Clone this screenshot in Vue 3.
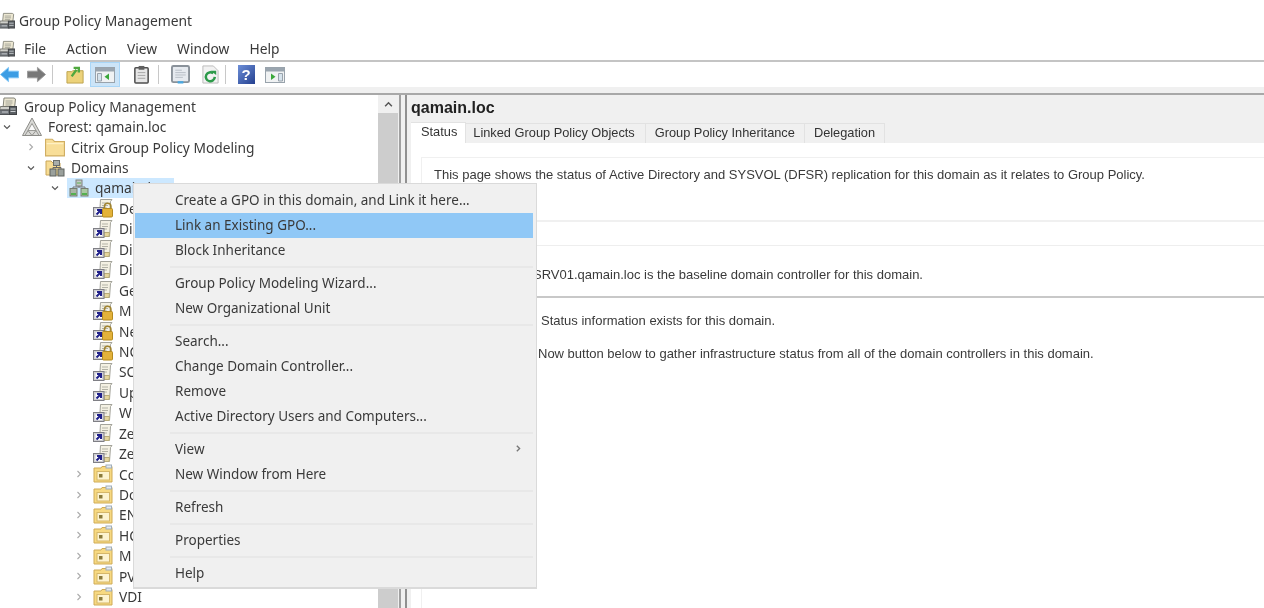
<script setup>
const menuBar = ['File', 'Action', 'View', 'Window', 'Help']
const tools = [
  ['back'], ['forward'], 'sep', ['up'], ['tree', true], ['clip'], 'sep', ['props'], ['refresh'], 'sep', ['help'], ['pane'],
]
const rows = [
  { level: 0, icon: 'gpm', text: 'Group Policy Management' },
  { level: 1, icon: 'forest', text: 'Forest: qamain.loc', chev: 'open' },
  { level: 2, icon: 'folder', text: 'Citrix Group Policy Modeling', chev: 'closed' },
  { level: 2, icon: 'domains', text: 'Domains', chev: 'open' },
  { level: 3, icon: 'domain', text: 'qamain.loc', chev: 'open', selected: true },
  ...[['De', 1], ['Di'], ['Di'], ['Di'], ['Ge'], ['M', 1], ['Ne', 1], ['NC', 1], ['SC'], ['Up'], ['W'], ['Ze'], ['Ze']].map(([text, lock]) => ({
    level: 4, icon: lock ? 'gpolock' : 'gpo', text,
  })),
  ...['Co', 'Do', 'EN', 'HC', 'M', 'PV', 'VDI'].map((text) => ({ level: 4, icon: 'ou', text, chev: 'closed' })),
]
const tabs = ['Status', 'Linked Group Policy Objects', 'Group Policy Inheritance', 'Delegation']
const menu = [
  ['Create a GPO in this domain, and Link it here...', 'Link an Existing GPO...', 'Block Inheritance'],
  ['Group Policy Modeling Wizard...', 'New Organizational Unit'],
  ['Search...', 'Change Domain Controller...', 'Remove', 'Active Directory Users and Computers...'],
  ['View', 'New Window from Here'],
  ['Refresh'],
  ['Properties'],
  ['Help'],
]
</script>

<template>
  <div class="app">
    <svg class="sprite" width="0" height="0">
      <defs>
        <symbol id="gpm" viewBox="0 0 18 18">
          <path d="M5 1h10l1.500 1-1 9H4z" fill="#ece7d2" stroke="#85857a" />
          <path d="M6.500 4h7M6.500 6h7M6.500 8h6" stroke="#a3a396" />
          <path d="M1.500 9.500h9l1 3.500H.5z" fill="#cfcfca" stroke="#77776f" />
          <rect x="0.500" y="13" width="11" height="4.500" fill="#74797e" stroke="#505357" />
          <rect x="10.500" y="9.500" width="7" height="8" fill="#5a5f63" stroke="#404346" />
          <path d="M11.500 12h5M11.500 14.500h5" stroke="#c8ccd0" />
          <path d="M3 15h6" stroke="#c9ccd0" />
        </symbol>
        <symbol id="forest" viewBox="0 0 20 20">
          <path d="M10 1 19.500 18.500H.5z" fill="#d9d9d6" stroke="#8b8b87" />
          <path d="M10 6.500 6 13.500h8z" fill="#fafafa" stroke="#9a9a96" />
          <path d="M6 13.500 3 18.500M14 13.500l3 5M6 13.500l4 5 4-5" stroke="#959591" fill="none" />
        </symbol>
        <symbol id="folder" viewBox="0 0 18 18">
          <path d="M.5 2h6l2 2h9v13H.5z" fill="#f8de98" stroke="#d0ae62" />
          <path d="M1.500 6h15" stroke="#fff2c8" />
        </symbol>
        <symbol id="domains" viewBox="0 0 20 18">
          <path d="M1 2h5l2 2h7v12H1z" fill="#f7dc93" stroke="#c9a658" />
          <rect x="8.500" y="1.500" width="6" height="5" fill="#a9aeaa" stroke="#6b6f6c" />
          <rect x="5" y="10" width="6" height="7" fill="#9aa09c" stroke="#5e625f" />
          <rect x="13" y="10" width="6" height="7" fill="#9aa09c" stroke="#5e625f" />
          <path d="M11.500 6.500V9M8 10V8.500h8V10" stroke="#666" fill="none" />
        </symbol>
        <symbol id="domain" viewBox="0 0 20 18">
          <rect x="7" y="1" width="6" height="6" fill="#c5c9c6" stroke="#7d817c" />
          <rect x="1" y="9.500" width="7" height="7.500" fill="#a9b5a6" stroke="#757d70" />
          <rect x="12" y="9.500" width="7" height="7.500" fill="#a9c8a2" stroke="#757d70" />
          <path d="M10 7v1.500M4 9.500V8h12v1.500" stroke="#777" fill="none" />
          <path d="M2 15h5M13 15h5" stroke="#55b04e" stroke-width="2" />
          <path d="M8 4h4" stroke="#55b04e" />
        </symbol>
        <g id="scroll">
          <path d="M7.500 1.500h11.500l-1.500 2-1 14H6.500z" fill="#f4f1e3" stroke="#a3a39a" />
          <path d="M9 5h6M9 7.500h6M9 10h5" stroke="#b3b3a6" />
          <path d="M11 13.500h5.500l-.5 4h-5z" fill="#e4d59c" stroke="#b8ab78" />
          <rect x="0.500" y="9.500" width="10.500" height="9" fill="#cfcfd3" stroke="#7f7f85" />
          <rect x="2.500" y="11.500" width="6.500" height="5.500" fill="#fff" />
          <path d="M3.500 16.500 7.500 12.500M4 12h4v4" stroke="#20208a" stroke-width="2" fill="none" />
        </g>
        <symbol id="gpo" viewBox="0 0 20 20"><use href="#scroll" /></symbol>
        <symbol id="gpolock" viewBox="0 0 20 20">
          <use href="#scroll" />
          <path d="M11.500 11V8.500a3.200 3.200 0 0 1 6.400 0V11" fill="none" stroke="#9f8330" stroke-width="1.600" />
          <rect x="9.500" y="10.500" width="10" height="8.500" rx="1" fill="#e3b23a" stroke="#b58b20" />
        </symbol>
        <symbol id="ou" viewBox="0 0 20 20">
          <path d="M1 4h7l1-1.500h10V18H1z" fill="#f7d981" stroke="#cfab56" />
          <rect x="13" y="1" width="5.500" height="3" fill="#e6ebf0" stroke="#9fadba" />
          <rect x="4" y="7.500" width="12.500" height="8.500" fill="#fdf3cf" stroke="#d6b769" />
          <path d="M6 10h3.500v3.500H6z" fill="#8a7a3a" />
        </symbol>
        <symbol id="back" viewBox="0 0 20 20"><path d="M.5 10 9 2.500V6.500h10.500v7H9v4z" fill="#3c9de4" stroke="#7cc4f5" /></symbol>
        <symbol id="forward" viewBox="0 0 20 20"><path d="M19.500 10 11 2.500V6.500H.5v7H11v4z" fill="#787878" stroke="#9a9a9a" /></symbol>
        <symbol id="up" viewBox="0 0 20 20">
          <path d="M1 7h5l1-1h11v13H1z" fill="#ecd27a" stroke="#bda24c" />
          <path d="M6 12 11 5M8 3h5.500v5" stroke="#4fa83f" stroke-width="2.500" fill="none" />
        </symbol>
        <symbol id="tree" viewBox="0 0 20 16">
          <rect x="0.500" y="0.500" width="19" height="15" fill="#f0f2f3" stroke="#99a3ac" />
          <rect x="1" y="1" width="18" height="3.500" fill="#9aa5af" />
          <path d="M2.500 6.500h4v7.500h-4z" fill="#d6e3ec" stroke="#99a3ac" />
          <path d="M14 6.500v6.500L9.500 9.750z" fill="#3aa83a" />
        </symbol>
        <symbol id="clip" viewBox="0 0 16 20">
          <rect x="1" y="3" width="14" height="16" rx="1" fill="#e6e6e6" stroke="#4f4f4f" stroke-width="1.600" />
          <rect x="5" y="1" width="6" height="4" fill="#5f5f5f" />
          <path d="M4 8h8M4 11h8M4 14h8" stroke="#a5a5a5" />
        </symbol>
        <symbol id="props" viewBox="0 0 20 20">
          <rect x="1" y="1" width="18" height="17" rx="1.500" fill="#e6eaef" stroke="#8a929a" stroke-width="2" />
          <path d="M4.500 5.500h7M4.500 8h11M4.500 10.500h11M4.500 13h8" stroke="#b7bec6" />
          <rect x="7" y="17" width="6" height="2.500" fill="#4aa8e0" />
        </symbol>
        <symbol id="refresh" viewBox="0 0 18 20">
          <path d="M1 1h11l5 5v13H1z" fill="#f2f2f2" stroke="#bbb" />
          <path d="M13.500 12.500a4.700 4.700 0 1 1-1.700-3.700" fill="none" stroke="#2d9a4a" stroke-width="2.600" />
          <path d="M9 6h6v4.500z" fill="#2d9a4a" />
        </symbol>
        <symbol id="pane" viewBox="0 0 20 16">
          <rect x="0.500" y="0.500" width="19" height="15" fill="#f0f2f3" stroke="#99a3ac" />
          <rect x="1" y="1" width="18" height="3.500" fill="#9aa5af" />
          <path d="M13.500 6.500h4v7.500h-4z" fill="#d6e3ec" stroke="#99a3ac" />
          <path d="M6 6.500v6.500l4.500-3.250z" fill="#3aa83a" />
        </symbol>
      </defs>
    </svg>

    <div class="title">
      <svg class="t-icon"><use href="#gpm" /></svg>
      <span>Group Policy Management</span>
    </div>

    <div class="menubar">
      <svg class="t-icon"><use href="#gpm" /></svg>
      <span v-for="m in menuBar" :key="m">{{ m }}</span>
    </div>

    <div class="toolbar">
      <template v-for="(t, i) in tools" :key="i">
        <i v-if="t === 'sep'" class="tsep"></i>
        <div v-else-if="t[0] === 'help'" class="tool help-tool"><b class="help">?</b></div>
        <div v-else class="tool" :class="[t[0], { active: t[1] }]">
          <svg><use :href="'#' + t[0]" /></svg>
        </div>
      </template>
    </div>

    <div class="main">
      <div class="tree">
        <div class="rows">
          <div
            v-for="(r, i) in rows"
            :key="i"
            class="row"
            :style="{ paddingLeft: Math.max(0, r.level - 1) * 24 + 'px' }"
          >
            <span class="chev">
              <svg v-if="r.chev === 'open'" viewBox="0 0 8 8"><path d="M1 2.500 4 5.500 7 2.500" /></svg>
              <svg v-else-if="r.chev === 'closed'" viewBox="0 0 8 8" class="light"><path d="M2.500 1 5.500 4 2.500 7" /></svg>
            </span>
            <span class="node" :class="{ selected: r.selected, root: r.level === 0, forest: r.level === 1 }">
              <svg class="n-icon"><use :href="'#' + r.icon" /></svg>
              <span class="label">{{ r.text }}</span>
            </span>
          </div>
        </div>
        <div class="scroll">
          <div class="arrow"><svg viewBox="0 0 8 8"><path d="M1 5.500 4 2.500 7 5.500" /></svg></div>
          <div class="thumb"></div>
        </div>
      </div>

      <div class="split"></div>

      <div class="detail">
        <h1>qamain.loc</h1>
        <div class="tabs">
          <span v-for="(t, i) in tabs" :key="t" class="tab" :class="{ on: i === 0 }">{{ t }}</span>
        </div>
        <div class="body">
          <div class="panel">
            <p class="intro">This page shows the status of Active Directory and SYSVOL (DFSR) replication for this domain as it relates to Group Policy.</p>
            <div class="strip"></div>
            <p class="base">SRV01.qamain.loc is the baseline domain controller for this domain.</p>
            <p class="s1">Status information exists for this domain.</p>
            <p class="s2">Now button below to gather infrastructure status from all of the domain controllers in this domain.</p>
          </div>
        </div>
      </div>
    </div>

    <div class="ctx">
      <template v-for="(group, g) in menu" :key="g">
        <div v-if="g" class="msep"></div>
        <div
          v-for="item in group"
          :key="item"
          class="mi"
          :class="{ hot: item.startsWith('Link an') }"
        >
          {{ item }}
          <svg v-if="item === 'View'" class="sub" viewBox="0 0 8 8"><path d="M2.500 1.500 5 4 2.500 6.500" /></svg>
        </div>
      </template>
    </div>
  </div>
</template>

<style>
html, body { margin: 0; background: #fff; overflow: hidden; }
</style>

<style scoped>
.app {
  position: relative;
  width: 1264px;
  height: 608px;
  overflow: hidden;
  background: #fff;
  font-family: "Noto Sans", sans-serif;
  font-size: 13.75px;
  color: #3a3a3a;
  filter: blur(0.45px);
}
.sprite { position: absolute; }
.title {
  height: 38px;
  display: flex;
  align-items: center;
  padding-top: 2px;
  box-sizing: border-box;
  font-size: 13.85px;
}
.title span { margin-left: 4px; }
.t-icon { width: 16px; height: 17px; margin-left: -1px; }
.menubar {
  height: 20px;
  padding-bottom: 2px;
  display: flex;
  align-items: center;
  border-bottom: 2px solid #c4c4c4;
  font-size: 13.8px;
}
.menubar span { margin-right: 20px; }
.menubar span:first-of-type { margin-left: 9px; }
.toolbar {
  height: 25px;
  display: flex;
  align-items: center;
  background: #fff;
  border-bottom: 6px solid #f0f0f0;
}
.tool { display: flex; align-items: center; justify-content: center; height: 25px; width: 20px; }
.tool svg { width: 19px; height: 19px; }
.back { margin-left: -1px; }
.forward { margin-left: 7px; }
.tsep { width: 1px; height: 19px; background: #c8c8c8; }
.forward + .tsep { margin-left: 6px; }
.up { margin-left: 12px; }
.tree.tool { width: 30px; margin-left: 5px; background: #cce4f7; border: 1px solid #a9d6f7; box-sizing: border-box; }
.tree.tool svg { width: 20px; height: 16px; }
.clip { margin-left: 11px; }
.clip + .tsep { margin-left: 7px; }
.props { margin-left: 11px; }
.refresh { margin-left: 10px; }
.refresh + .tsep { margin-left: 5px; }
.help-tool { margin-left: 10px; }
.help {
  width: 17px; height: 19px;
  background: linear-gradient(135deg, #6d8fd8, #24408f);
  color: #fff;
  font: bold 15px/19px "Liberation Sans", sans-serif;
  text-align: center;
}
.pane { margin-left: 9px; }
.pane svg { width: 20px; height: 16px; }
.main {
  display: flex;
  height: 514px;
  border-top: 2px solid #a8a8a8;
}
.tree:not(.tool) { display: flex; width: 399px; flex: none; }
.rows { flex: 1; padding-top: 1px; min-width: 0; }
.row {
  height: 20.45px;
  display: flex;
  align-items: center;
  white-space: nowrap;
}
.chev { width: 14px; height: 14px; flex: none; display: flex; align-items: center; justify-content: center; }
.chev svg { width: 8px; height: 8px; fill: none; stroke: #555; stroke-width: 1.100; }
.chev svg.light { stroke: #aaa; }
.node { display: flex; align-items: center; height: 20px; margin-left: 7px; padding-right: 8px; }
.node.root { margin-left: -15px; }
.node.forest { margin-left: 8px; }
.node.selected { background: #cce8ff; margin-left: 5px; padding-left: 2px; }
.n-icon { width: 20px; height: 20px; flex: none; margin-right: 6px; }
.node.root .n-icon { width: 18px; margin-right: 7px; }
.scroll { width: 20px; background: #f0f0f0; flex: none; border-right: 1px solid #f0f0f0; }
.arrow { height: 18px; display: flex; align-items: center; justify-content: center; }
.arrow svg { width: 9px; height: 9px; fill: none; stroke: #555; stroke-width: 1.300; }
.thumb { height: 496px; background: #cdcdcd; }
.split { width: 6px; flex: none; background: #f0f0f0; border-left: 2px solid #a0a0a0; box-sizing: border-box; }
.detail {
  flex: 1;
  background: #f0f0f0;
  border-left: 2px solid #909090;
  padding-left: 4px;
  display: flex;
  flex-direction: column;
  min-width: 0;
  font-family: "Liberation Sans", sans-serif;
}
h1 {
  margin: 0;
  height: 27px;
  line-height: 26px;
  font-size: 16px;
  color: #222;
  flex: none;
}
.tabs { display: flex; height: 21px; flex: none; }
.tab {
  font-size: 12.800px;
  line-height: 15px;
  padding: 1px 9px 0;
  background: #f0f0f0;
  border-right: 1px solid #e2e2e2;
  border-top: 1px solid #e2e2e2;
  color: #333;
  box-sizing: border-box;
  height: 21px;
  margin-top: 1px;
}
.tab.on + .tab { padding-left: 7px; padding-right: 10px; }
.tab.on {
  background: #fff;
  padding: 1px 8px 0 10px;
  height: 22px;
  margin-top: 0;
}
.body { flex: 1; background: #fff; padding: 14px 0 0 10px; }
.panel {
  border-left: 1px solid #f0f0f0;
  border-top: 1px solid #f0f0f0;
  height: 460px;
  color: #3a3a3a;
  font-size: 13px;
  line-height: 15px;
}
p { margin: 0; white-space: nowrap; }
.intro { padding: 9px 0 0 12px; height: 53px; }
.strip { height: 23px; border-top: 2px solid #f0f0f0; border-bottom: 1px solid #eee; }
.base { padding: 21px 0 14px 111px; height: 15px; border-bottom: 2px solid #c8c8c8; }
.s1 { padding: 15px 0 0 119px; }
.s2 { padding: 18px 0 0 116px; }
.ctx {
  position: absolute;
  left: 133px;
  top: 183px;
  padding: 4px 3px 0 1px;
  width: 398px;
  height: 399px;
  background: #f0f0f0;
  border: 1px solid #dadada;
  border-width: 1px 1px 2px 1px;
  font-size: 13.5px;
  color: #3a3a3a;
}
.mi {
  height: 25px;
  line-height: 24px;
  padding-left: 40px;
  position: relative;
}
.mi.hot { background: #90c8f6; }
.msep { height: 2px; margin: 3px 0 3px 35px; background: #e8e8e8; }
.sub { position: absolute; right: 10px; top: 7px; width: 9px; height: 9px; fill: none; stroke: #777; stroke-width: 1.200; }
</style>
